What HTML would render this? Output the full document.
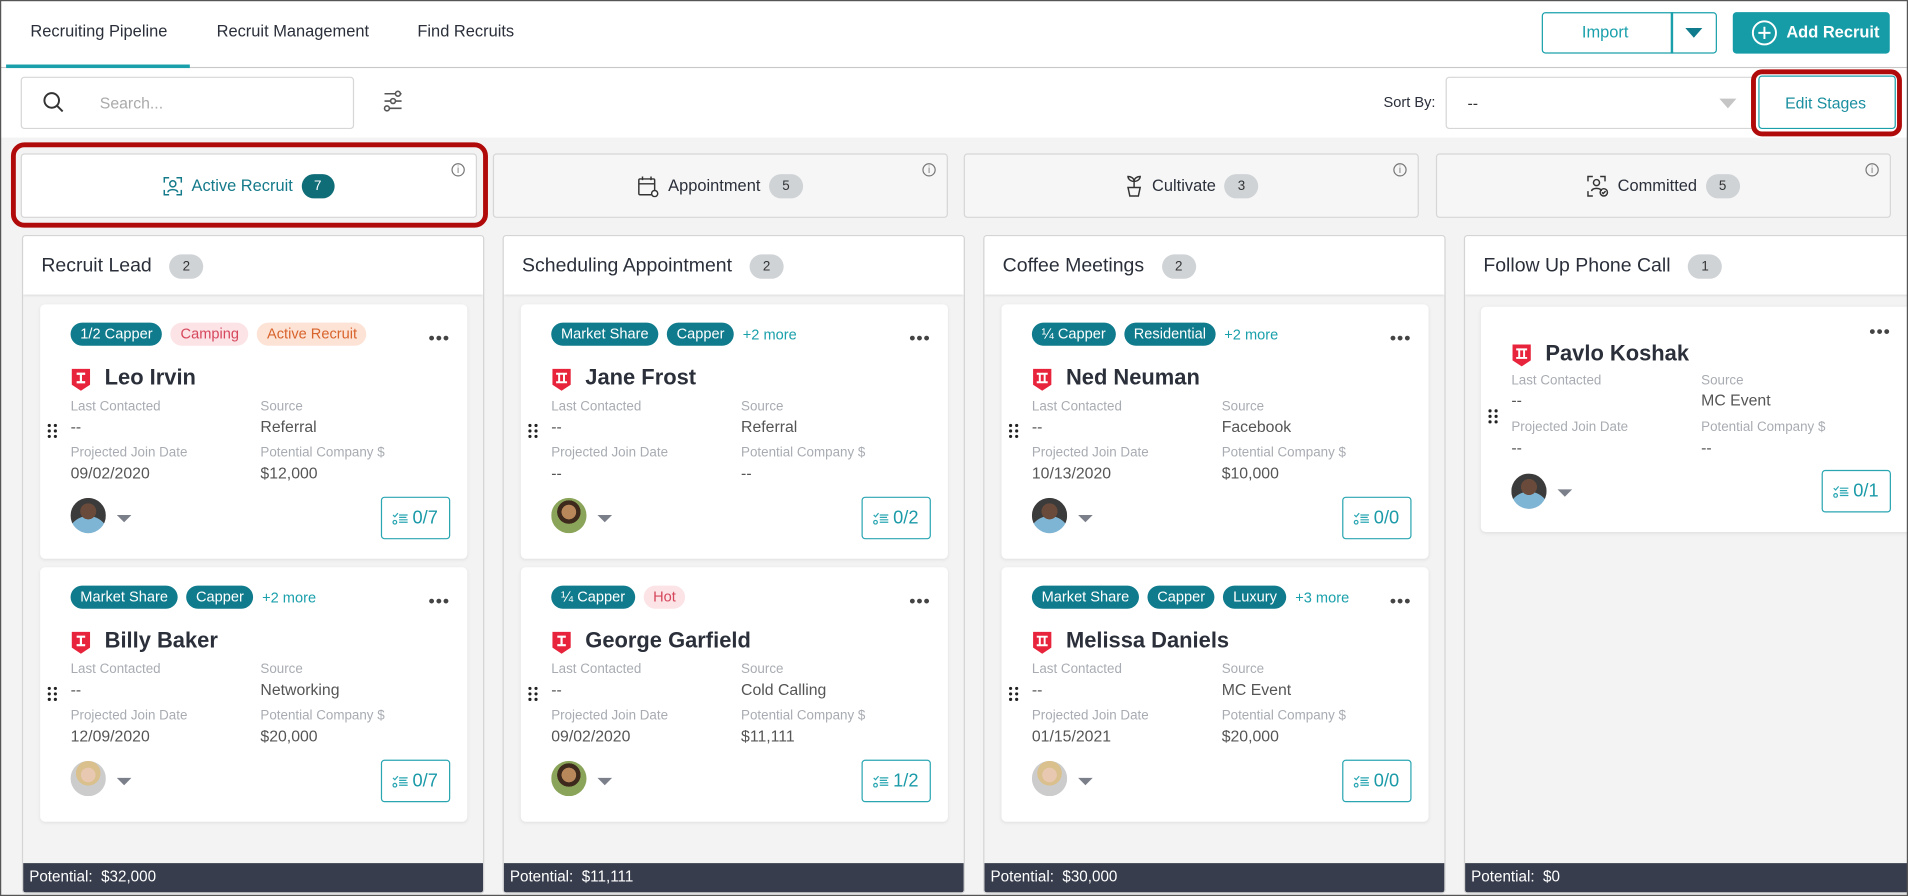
<!DOCTYPE html>
<html><head><meta charset="utf-8"><style>
*{box-sizing:border-box;margin:0;padding:0}
html,body{width:1908px;height:896px;overflow:hidden;background:#fff;font-family:"Liberation Sans",sans-serif}
#w{position:absolute;left:0;top:0;width:1568px;height:736px;transform:scale(1.21684,1.21739);transform-origin:0 0;background:#f3f3f3;overflow:hidden}
.a{position:absolute}
.hdr{left:0;top:0;width:1568px;height:56px;background:#fff;border-bottom:1px solid #c8c8c8}
.tab{top:18px;font-size:13.5px;color:#2a2f3a}
.tb{top:56px;left:0;width:1568px;height:57px;background:#fff}
.stage{top:126px;height:53px;width:374px;border:1px solid #d6d6d6;border-radius:3px;background:#f6f6f6;display:flex;align-items:center;justify-content:center;font-size:13.5px;color:#2a2f3a;gap:7px}
.cnt{display:inline-block;min-width:28px;height:20px;border-radius:10px;background:#cfd3d6;color:#333;font-size:11px;text-align:center;line-height:20px}
.info{position:absolute;right:9px;top:7px;width:11px;height:11px;border:1px solid #777;border-radius:50%;font-size:8px;line-height:9px;text-align:center;color:#777}
.col{top:193px;width:380px;height:541px;border:1px solid #d4d4d4;border-radius:3px;background:#f3f3f3;overflow:hidden}
.colh{left:0;top:0;width:100%;height:48px;background:#fff;box-shadow:0 1px 2px rgba(0,0,0,.1);font-size:16px;color:#2a2f3a;padding:15px 0 0 15px}
.colh .cnt{margin-left:10px;vertical-align:1px}
.foot{left:0;bottom:0;width:100%;height:24px;background:#373d4c;color:#fff;font-size:12.5px;padding:4px 0 0 5px}
.card{width:351px;height:209px;background:#fff;border-radius:4px;box-shadow:0 1px 3px rgba(0,0,0,.08)}
.tags{left:25px;top:15px;display:flex;gap:7px;align-items:center}
.tg{height:19px;line-height:19px;border-radius:10px;padding:0 8px;font-size:12px;background:#0f7b8c;color:#fff}
.tg.p{background:#fbe3e6;color:#d6475c}
.tg.o{background:#fde3d5;color:#d8632c}
.more{color:#1aa0ab;font-size:12px}
.menu{right:14px;top:19px;font-size:14px;letter-spacing:1px;color:#444;font-weight:bold}
.ic{left:25px;top:52px;width:17px;height:20px}
.nm{left:53px;top:50px;font-size:18px;color:#2a2f3a;font-weight:bold}
.lb{font-size:11px;color:#a8acb2}
.vl{font-size:13px;color:#555}
.av{left:25px;top:159px;width:29px;height:29px;border-radius:50%;background:radial-gradient(circle at 50% 38%,#6a4a3a 0 28%,transparent 29%),radial-gradient(circle at 50% 110%,#7fb5d4 0 48%,transparent 49%),#3b3b3b}
.av.f{background:radial-gradient(circle at 50% 40%,#e8c8b0 0 26%,transparent 27%),radial-gradient(circle at 50% 35%,#d9c08c 0 42%,transparent 43%),#ccc}
.av.g{background:radial-gradient(circle at 50% 40%,#b8875a 0 26%,transparent 27%),radial-gradient(circle at 50% 40%,#3e2a1c 0 42%,transparent 43%),#8aa55a}
.car{left:63px;top:173px;width:0;height:0;border-left:6px solid transparent;border-right:6px solid transparent;border-top:6px solid #7a7f8a}
.tk{left:280px;top:158px;width:57px;height:35px;border:1.5px solid #2aa6b2;border-radius:3px;color:#1b9aa8;font-size:15px;padding:8px 0 0 25px}
.tk svg{position:absolute;left:8px;top:12px}
.drag{left:6px;top:98px;width:8px;height:12px}
</style></head><body><div id="w">
<div class="a hdr"></div>
<div class="a tab" style="left:25px">Recruiting Pipeline</div>
<div class="a tab" style="left:178px">Recruit Management</div>
<div class="a tab" style="left:343px">Find Recruits</div>
<div class="a" style="left:5px;top:53px;width:151px;height:3px;background:#1aa0ab"></div>
<div class="a" style="left:1267px;top:10px;width:144px;height:34px;border:1.5px solid #1aa0ab;border-radius:3px;background:#fff"></div>
<div class="a" style="left:1373px;top:10px;width:1.5px;height:34px;background:#1aa0ab"></div>
<div class="a" style="left:1300px;top:19px;font-size:13.5px;color:#1aa0ab">Import</div>
<div class="a" style="left:1385px;top:23px;border-left:7px solid transparent;border-right:7px solid transparent;border-top:8px solid #0f7b8c"></div>
<div class="a" style="left:1424px;top:10px;width:129px;height:34px;background:#169ca7;border-radius:3px"></div>
<svg class="a" style="left:1439px;top:16px" width="22" height="22" viewBox="0 0 22 22"><circle cx="11" cy="11" r="9.5" fill="none" stroke="#fff" stroke-width="1.6"/><path d="M11 6v10M6 11h10" stroke="#fff" stroke-width="1.6"/></svg>
<div class="a" style="left:1468px;top:19px;font-size:13.5px;color:#fff;font-weight:bold">Add Recruit</div>
<div class="a tb"></div>
<div class="a" style="left:17px;top:63px;width:274px;height:43px;border:1px solid #d6d6d6;border-radius:3px;background:#fff"></div>
<svg class="a" style="left:35px;top:75px" width="18" height="18" viewBox="0 0 18 18"><circle cx="7.5" cy="7.5" r="6" fill="none" stroke="#333" stroke-width="1.6"/><path d="M12 12l4.5 4.5" stroke="#333" stroke-width="1.6"/></svg>
<div class="a" style="left:82px;top:77px;font-size:13px;color:#aaa">Search...</div>
<svg class="a" style="left:314px;top:73px" width="18" height="20" viewBox="0 0 18 20"><g stroke="#555" stroke-width="1.3" fill="#fff"><path d="M2 4h14M2 10h14M2 16h14"/><circle cx="13" cy="4" r="2"/><circle cx="9" cy="10" r="2"/><circle cx="4" cy="16" r="2"/></g></svg>
<div class="a" style="left:1137px;top:77px;font-size:12px;color:#2a2f3a">Sort By:</div>
<div class="a" style="left:1188px;top:63px;width:255px;height:43px;border:1px solid #d6d6d6;border-radius:3px;background:#fff"></div>
<div class="a" style="left:1206px;top:77px;font-size:13px;color:#333">--</div>
<div class="a" style="left:1413px;top:81px;border-left:7px solid transparent;border-right:7px solid transparent;border-top:8px solid #c5c5c5"></div>
<div class="a" style="left:1445px;top:62px;width:113px;height:44px;border:1.5px solid #1aa0ab;border-radius:3px;background:#fff"></div>
<div class="a" style="left:1467px;top:77px;font-size:13px;color:#1a8fa0">Edit Stages</div>
<div class="a" style="left:1439px;top:57px;width:124px;height:55px;border:4px solid #b00a0a;border-radius:9px"></div>

<div class="a stage" style="left:17px;background:#fff;width:375px;color:#157a8a"><svg width="16" height="16" viewBox="0 0 16 16"><g fill="none" stroke="#157a8a" stroke-width="1.2"><path d="M1 5V1h4M11 1h4v4M15 11v4h-4M5 15H1v-4"/><circle cx="8" cy="6" r="2.5"/><path d="M4 13c0-3 8-3 8 0"/></g></svg>Active Recruit <span class="cnt" style="background:#0f6d77;color:#fff;min-width:27px">7</span><span class="info">i</span></div>
<div class="a" style="left:9px;top:117px;width:392px;height:70px;border:4px solid #b00a0a;border-radius:11px"></div>
<div class="a stage" style="left:405px"><svg width="18" height="18" viewBox="0 0 18 18"><g fill="none" stroke="#333" stroke-width="1.2"><rect x="1" y="3" width="13" height="13" rx="1"/><path d="M1 7h13M4 1v3M11 1v3"/><circle cx="14" cy="15" r="2.5" fill="#fff"/></g></svg>Appointment <span class="cnt">5</span><span class="info">i</span></div>
<div class="a stage" style="left:792px"><svg width="16" height="18" viewBox="0 0 16 18"><g fill="none" stroke="#333" stroke-width="1.2"><path d="M3 10h10l-1.5 7h-7z M8 10V5M8 5C8 2 5 1 3 1c0 2 2 4 5 4M8 5c0-3 3-4 5-4 0 2-2 4-5 4"/></g></svg>Cultivate <span class="cnt">3</span><span class="info">i</span></div>
<div class="a stage" style="left:1180px"><svg width="18" height="18" viewBox="0 0 18 18"><g fill="none" stroke="#333" stroke-width="1.2"><path d="M1 5V1h4M11 1h4v4M5 17H1v-4"/><circle cx="8" cy="6" r="2.5"/><path d="M4 13c0-3 8-3 8 0"/><circle cx="14" cy="14" r="3"/><path d="M12.5 14l1 1 2-2"/></g></svg>Committed <span class="cnt">5</span><span class="info">i</span></div>

<div class="a col" style="left:18px"><div class="a colh">Recruit Lead <span class="cnt">2</span></div><div class="a foot">Potential:&nbsp; $32,000</div></div>
<div class="a col" style="left:413px"><div class="a colh">Scheduling Appointment <span class="cnt">2</span></div><div class="a foot">Potential:&nbsp; $11,111</div></div>
<div class="a col" style="left:808px"><div class="a colh">Coffee Meetings <span class="cnt">2</span></div><div class="a foot">Potential:&nbsp; $30,000</div></div>
<div class="a col" style="left:1203px;width:370px"><div class="a colh">Follow Up Phone Call <span class="cnt">1</span></div><div class="a foot">Potential:&nbsp; $0</div></div>

<svg width="0" height="0" style="position:absolute"><defs>
<symbol id="i1" viewBox="0 0 17 20"><path d="M1 1h15v13l-7.5 5L1 14z" fill="#e8243c"/><path d="M5 5h7M5 12h7M8.5 5v7" stroke="#fff" stroke-width="1.8"/></symbol>
<symbol id="i2" viewBox="0 0 17 20"><path d="M1 1h15v13l-7.5 5L1 14z" fill="#e8243c"/><path d="M4 5h9M4 12h9M6.5 5v7M10.5 5v7" stroke="#fff" stroke-width="1.6"/></symbol>
<symbol id="tk" viewBox="0 0 14 10"><g stroke="#2aa6b2" stroke-width="1" fill="none"><path d="M1 2l1.5 1.5L5 0.5"/><circle cx="2.5" cy="8" r="1.5"/><path d="M6 2h7M6 4h6M6 6h7M6 8h7"/></g></symbol>
<symbol id="dg" viewBox="0 0 8 12"><g fill="#222"><circle cx="1.5" cy="1.5" r="1.3"/><circle cx="6.5" cy="1.5" r="1.3"/><circle cx="1.5" cy="6" r="1.3"/><circle cx="6.5" cy="6" r="1.3"/><circle cx="1.5" cy="10.5" r="1.3"/><circle cx="6.5" cy="10.5" r="1.3"/></g></symbol>
</defs></svg>

<div class="a card" style="left:33px;top:250px">
<div class="a tags"><span class="tg">1/2 Capper</span><span class="tg p">Camping</span><span class="tg o">Active Recruit</span></div><div class="a menu">•••</div>
<svg class="a ic"><use href="#i1"/></svg><div class="a nm">Leo Irvin</div><svg class="a drag"><use href="#dg"/></svg>
<div class="a lb" style="left:25px;top:78px">Last Contacted</div><div class="a vl" style="left:25px;top:93px">--</div>
<div class="a lb" style="left:181px;top:78px">Source</div><div class="a vl" style="left:181px;top:93px">Referral</div>
<div class="a lb" style="left:25px;top:116px">Projected Join Date</div><div class="a vl" style="left:25px;top:131px">09/02/2020</div>
<div class="a lb" style="left:181px;top:116px">Potential Company $</div><div class="a vl" style="left:181px;top:131px">$12,000</div>
<div class="a av"></div><div class="a car"></div><div class="a tk"><svg width="14" height="10"><use href="#tk"/></svg>0/7</div></div>

<div class="a card" style="left:33px;top:466px">
<div class="a tags"><span class="tg">Market Share</span><span class="tg">Capper</span><span class="more">+2 more</span></div><div class="a menu">•••</div>
<svg class="a ic"><use href="#i1"/></svg><div class="a nm">Billy Baker</div><svg class="a drag"><use href="#dg"/></svg>
<div class="a lb" style="left:25px;top:78px">Last Contacted</div><div class="a vl" style="left:25px;top:93px">--</div>
<div class="a lb" style="left:181px;top:78px">Source</div><div class="a vl" style="left:181px;top:93px">Networking</div>
<div class="a lb" style="left:25px;top:116px">Projected Join Date</div><div class="a vl" style="left:25px;top:131px">12/09/2020</div>
<div class="a lb" style="left:181px;top:116px">Potential Company $</div><div class="a vl" style="left:181px;top:131px">$20,000</div>
<div class="a av f"></div><div class="a car"></div><div class="a tk"><svg width="14" height="10"><use href="#tk"/></svg>0/7</div></div>

<div class="a card" style="left:428px;top:250px">
<div class="a tags"><span class="tg">Market Share</span><span class="tg">Capper</span><span class="more">+2 more</span></div><div class="a menu">•••</div>
<svg class="a ic"><use href="#i2"/></svg><div class="a nm">Jane Frost</div><svg class="a drag"><use href="#dg"/></svg>
<div class="a lb" style="left:25px;top:78px">Last Contacted</div><div class="a vl" style="left:25px;top:93px">--</div>
<div class="a lb" style="left:181px;top:78px">Source</div><div class="a vl" style="left:181px;top:93px">Referral</div>
<div class="a lb" style="left:25px;top:116px">Projected Join Date</div><div class="a vl" style="left:25px;top:131px">--</div>
<div class="a lb" style="left:181px;top:116px">Potential Company $</div><div class="a vl" style="left:181px;top:131px">--</div>
<div class="a av g"></div><div class="a car"></div><div class="a tk"><svg width="14" height="10"><use href="#tk"/></svg>0/2</div></div>

<div class="a card" style="left:428px;top:466px">
<div class="a tags"><span class="tg">¼ Capper</span><span class="tg p">Hot</span></div><div class="a menu">•••</div>
<svg class="a ic"><use href="#i1"/></svg><div class="a nm">George Garfield</div><svg class="a drag"><use href="#dg"/></svg>
<div class="a lb" style="left:25px;top:78px">Last Contacted</div><div class="a vl" style="left:25px;top:93px">--</div>
<div class="a lb" style="left:181px;top:78px">Source</div><div class="a vl" style="left:181px;top:93px">Cold Calling</div>
<div class="a lb" style="left:25px;top:116px">Projected Join Date</div><div class="a vl" style="left:25px;top:131px">09/02/2020</div>
<div class="a lb" style="left:181px;top:116px">Potential Company $</div><div class="a vl" style="left:181px;top:131px">$11,111</div>
<div class="a av g"></div><div class="a car"></div><div class="a tk"><svg width="14" height="10"><use href="#tk"/></svg>1/2</div></div>

<div class="a card" style="left:823px;top:250px">
<div class="a tags"><span class="tg">¼ Capper</span><span class="tg">Residential</span><span class="more">+2 more</span></div><div class="a menu">•••</div>
<svg class="a ic"><use href="#i2"/></svg><div class="a nm">Ned Neuman</div><svg class="a drag"><use href="#dg"/></svg>
<div class="a lb" style="left:25px;top:78px">Last Contacted</div><div class="a vl" style="left:25px;top:93px">--</div>
<div class="a lb" style="left:181px;top:78px">Source</div><div class="a vl" style="left:181px;top:93px">Facebook</div>
<div class="a lb" style="left:25px;top:116px">Projected Join Date</div><div class="a vl" style="left:25px;top:131px">10/13/2020</div>
<div class="a lb" style="left:181px;top:116px">Potential Company $</div><div class="a vl" style="left:181px;top:131px">$10,000</div>
<div class="a av"></div><div class="a car"></div><div class="a tk"><svg width="14" height="10"><use href="#tk"/></svg>0/0</div></div>

<div class="a card" style="left:823px;top:466px">
<div class="a tags"><span class="tg">Market Share</span><span class="tg">Capper</span><span class="tg">Luxury</span><span class="more">+3 more</span></div><div class="a menu">•••</div>
<svg class="a ic"><use href="#i2"/></svg><div class="a nm">Melissa Daniels</div><svg class="a drag"><use href="#dg"/></svg>
<div class="a lb" style="left:25px;top:78px">Last Contacted</div><div class="a vl" style="left:25px;top:93px">--</div>
<div class="a lb" style="left:181px;top:78px">Source</div><div class="a vl" style="left:181px;top:93px">MC Event</div>
<div class="a lb" style="left:25px;top:116px">Projected Join Date</div><div class="a vl" style="left:25px;top:131px">01/15/2021</div>
<div class="a lb" style="left:181px;top:116px">Potential Company $</div><div class="a vl" style="left:181px;top:131px">$20,000</div>
<div class="a av f"></div><div class="a car"></div><div class="a tk"><svg width="14" height="10"><use href="#tk"/></svg>0/0</div></div>

<div class="a card" style="left:1217px;top:252px;height:185px;width:360px">
<div class="a menu" style="right:23px;top:12px">•••</div>
<svg class="a ic" style="top:30px"><use href="#i2"/></svg><div class="a nm" style="top:28px">Pavlo Koshak</div><svg class="a drag" style="top:84px"><use href="#dg"/></svg>
<div class="a lb" style="left:25px;top:55px">Last Contacted</div><div class="a vl" style="left:25px;top:69px">--</div>
<div class="a lb" style="left:181px;top:55px">Source</div><div class="a vl" style="left:181px;top:69px">MC Event</div>
<div class="a lb" style="left:25px;top:93px">Projected Join Date</div><div class="a vl" style="left:25px;top:108px">--</div>
<div class="a lb" style="left:181px;top:93px">Potential Company $</div><div class="a vl" style="left:181px;top:108px">--</div>
<div class="a av" style="top:137px"></div><div class="a car" style="top:150px"></div><div class="a tk" style="top:134px"><svg width="14" height="10"><use href="#tk"/></svg>0/1</div></div>

<div class="a" style="left:0;top:0;width:1568px;height:736px;border:1px solid #555;pointer-events:none"></div>
</div></body></html>
